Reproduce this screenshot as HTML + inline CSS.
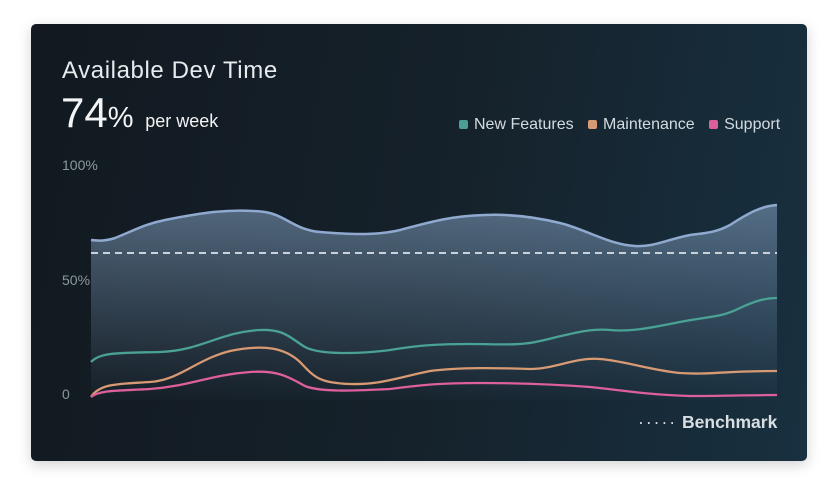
<!DOCTYPE html>
<html><head><meta charset="utf-8"><style>
html,body{margin:0;padding:0;background:#fff;width:839px;height:500px;overflow:hidden;font-family:"Liberation Sans",sans-serif}
.card{position:absolute;left:31px;top:24px;width:776px;height:437px;border-radius:5px;
background:linear-gradient(100deg,#121920 0%,#15212a 50%,#183040 100%);box-shadow:0 4px 14px rgba(0,0,0,.18)}
.t{position:absolute;color:#e6ebee;white-space:nowrap}
</style></head><body>
<div class="card"></div>
<div class="t" style="left:62px;top:57px;font-size:24px;letter-spacing:0.6px">Available Dev Time</div>
<div class="t" style="left:61px;top:89px;font-size:42px;color:#f2f4f5">74<span style="font-size:29px">%</span> <span style="font-size:18px">per week</span></div>
<div class="t" style="left:62px;top:157px;font-size:14px;color:#8d979e">100%</div>
<div class="t" style="left:62px;top:272px;font-size:14px;color:#8d979e">50%</div>
<div class="t" style="left:62px;top:386px;font-size:14px;color:#8d979e">0</div>
<div class="t" style="left:459px;top:116px;font-size:16px;color:#d4dbe0">
<span style="display:inline-block;width:9px;height:9px;border-radius:2px;background:#4a9e94;margin-right:6px"></span>New Features
<span style="display:inline-block;width:9px;height:9px;border-radius:2px;background:#d89a72;margin:0 6px 0 10px"></span>Maintenance
<span style="display:inline-block;width:9px;height:9px;border-radius:2px;background:#d9609a;margin:0 6px 0 10px"></span>Support</div>
<div class="t" style="left:638px;top:412px;font-size:17.5px;font-weight:bold;color:#d8dee2"><span style="letter-spacing:2px;font-weight:normal">·····</span> Benchmark</div>
<svg width="839" height="500" style="position:absolute;left:0;top:0">
<defs><linearGradient id="g" x1="0" y1="0" x2="0" y2="1">
<stop offset="0" stop-color="#7590ad" stop-opacity=".65"/><stop offset="1" stop-color="#6d8aa8" stop-opacity="0.02"/></linearGradient></defs>
<path d="M91,240 C100,241 105,241 115,238 C135,230 145,224 165,220 C200,213 230,208 265,212 C285,215 295,230 320,232 C345,234 375,236 400,230 C430,222 450,216 485,215 C510,214 535,217 560,223 C585,229 610,245 635,246 C655,247 665,240 690,235 C705,233 715,233 730,225 C750,212 762,206 777,205 L777,400 L91,400 Z" fill="url(#g)"/>
<path d="M91,240 C100,241 105,241 115,238 C135,230 145,224 165,220 C200,213 230,208 265,212 C285,215 295,230 320,232 C345,234 375,236 400,230 C430,222 450,216 485,215 C510,214 535,217 560,223 C585,229 610,245 635,246 C655,247 665,240 690,235 C705,233 715,233 730,225 C750,212 762,206 777,205" fill="none" stroke="#8fa9cf" stroke-width="2.5"/>
<line x1="91" y1="253" x2="777" y2="253" stroke="#c9d2da" stroke-width="2" stroke-dasharray="7,5"/>
<path d="M91,362 C100,352 120,353 160,352 C200,351 220,332 260,330 C285,329 290,338 305,347 C320,355 360,354 390,350 C420,345 440,344 470,344 C500,344 520,346 540,341 C570,334 590,328 610,330 C630,332 650,328 680,322 C710,316 720,318 740,308 C755,301 765,298 777,298" fill="none" stroke="#4aa294" stroke-width="2.3"/>
<path d="M91,397 C100,383 120,384 150,382 C180,380 195,360 230,351 C265,344 285,348 300,362 C315,378 320,383 350,384 C380,385 400,377 430,371 C460,367 500,368 530,369 C555,369 575,357 600,359 C625,361 650,370 680,373 C710,375 720,371 777,371" fill="none" stroke="#d89a72" stroke-width="2.3"/>
<path d="M91,397 C100,390 115,391 150,389 C190,386 210,375 250,372 C280,370 290,378 305,386 C320,392 350,391 390,389 C420,385 440,383 480,383 C520,383 550,384 590,387 C620,390 650,395 690,396 C720,396 750,395 777,395" fill="none" stroke="#dd5f9b" stroke-width="2.3"/>
</svg>
</body></html>
